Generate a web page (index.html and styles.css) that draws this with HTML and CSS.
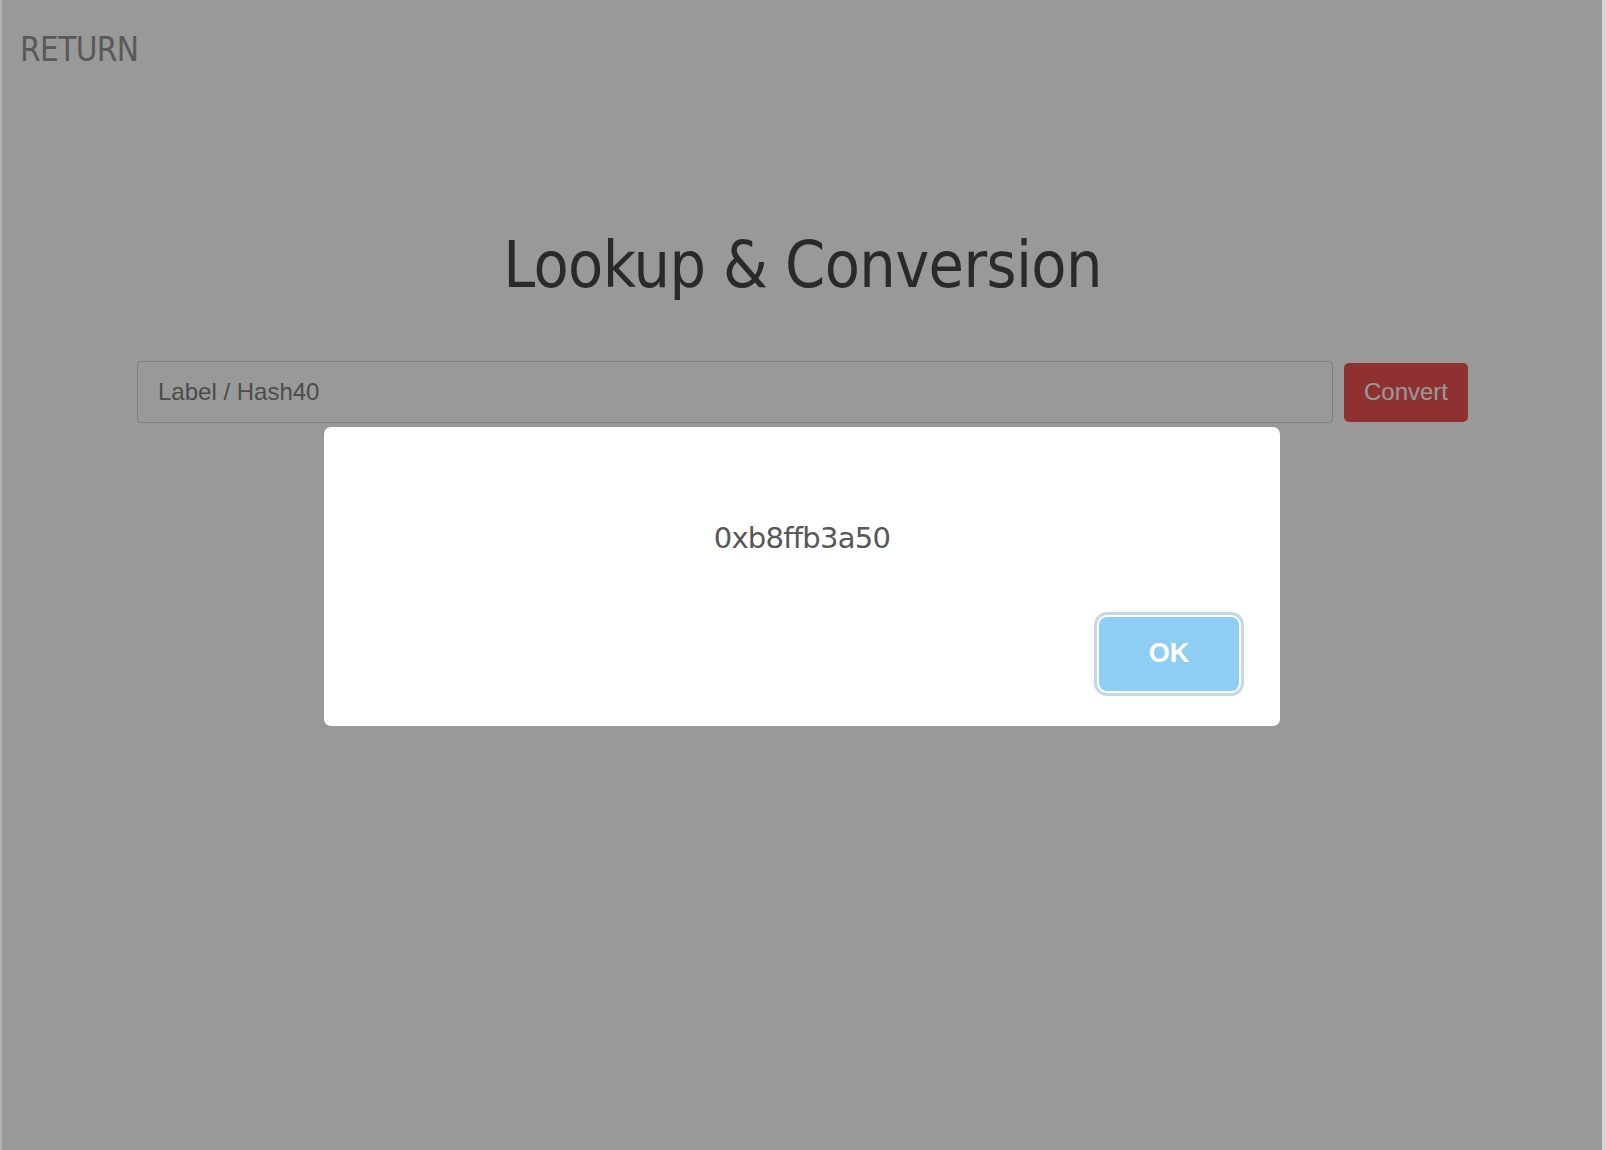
FILE: index.html
```html
<!DOCTYPE html>
<html lang="en">
<head>
<meta charset="utf-8">
<title>Lookup &amp; Conversion</title>
<link rel="stylesheet" href="styles.css">
</head>
<body>
  <header class="top">
    <a class="return" href="#">RETURN</a>
  </header>
  <main class="page">
    <h1 class="title">Lookup &amp; Conversion</h1>
    <form class="lookup">
      <input class="lookup-input" type="text" placeholder="Label / Hash40">
      <button class="convert" type="button">Convert</button>
    </form>
  </main>
  <div class="overlay">
    <div class="modal">
      <p class="modal-text">0xb8ffb3a50</p>
      <div class="modal-actions">
        <button class="ok" type="button">OK</button>
      </div>
    </div>
  </div>
</body>
</html>
```

FILE: styles.css
```css
html, body {
  margin: 0;
  padding: 0;
  background: #ffffff;
  height: 100%;
}

body {
  font-family: "DejaVu Sans", sans-serif;
  overflow: hidden;
}

.top {
  padding: 30px 0 0 20px;
}

.return {
  display: inline-block;
  font-family: "DejaVu Sans Condensed", "DejaVu Sans", sans-serif;
  font-stretch: condensed;
  font-size: 33px;
  line-height: 40px;
  letter-spacing: -0.6px;
  color: #959595;
  text-decoration: none;
}

.page {
  width: 1331px;
  margin: 0 0 0 137px;
}

.title {
  margin: 157px 0 0;
  text-align: center;
  font-family: "DejaVu Sans Condensed", "DejaVu Sans", sans-serif;
  font-stretch: condensed;
  font-weight: normal;
  font-size: 64px;
  line-height: 76px;
  letter-spacing: -0.6px;
  color: #464646;
}

.lookup {
  margin: 58px 0 0;
  display: flex;
  align-items: center;
  gap: 11px;
}

.lookup-input {
  flex: 1;
  box-sizing: border-box;
  height: 62px;
  margin: 0;
  padding: 0 20px;
  border: 1px solid #d4d4d4;
  border-radius: 4px;
  background: #ffffff;
  font-family: "Liberation Sans", Arial, sans-serif;
  font-size: 24px;
  color: #7f7f7f;
  outline: none;
}

.lookup-input::placeholder {
  color: #7f7f7f;
  opacity: 1;
}

.convert {
  box-sizing: border-box;
  width: 124px;
  height: 59px;
  margin: 0;
  padding: 0;
  border: none;
  border-radius: 5px;
  background: #ef5350;
  color: #ffffff;
  font-family: "Liberation Sans", Arial, sans-serif;
  font-size: 24px;
}

.overlay {
  position: fixed;
  inset: 0;
  box-sizing: border-box;
  display: flex;
  align-items: center;
  justify-content: center;
  background: rgba(0, 0, 0, 0.4);
  border-left: 2px solid #b0b0b0;
  border-right: 4px solid #d6d6d6;
}

.modal {
  box-sizing: border-box;
  width: 956px;
  margin-top: 2px;
  padding: 93px 41px 35px;
  background: #ffffff;
  border-radius: 7px;
}

.modal-text {
  margin: 0;
  text-align: center;
  font-family: "DejaVu Sans", sans-serif;
  font-size: 29px;
  line-height: 36px;
  letter-spacing: -0.7px;
  color: #575757;
}

.modal-actions {
  margin-top: 61px;
  display: flex;
  justify-content: flex-end;
}

.ok {
  box-sizing: border-box;
  width: 140px;
  height: 74px;
  margin: 0;
  padding: 0;
  border: none;
  border-radius: 8px;
  background: #8ecdf4;
  color: #ffffff;
  font-family: "Liberation Sans", Arial, sans-serif;
  font-weight: bold;
  font-size: 27px;
  box-shadow: 0 0 0 2px #ffffff, 0 0 0 5px #c7d7e6;
}
```
